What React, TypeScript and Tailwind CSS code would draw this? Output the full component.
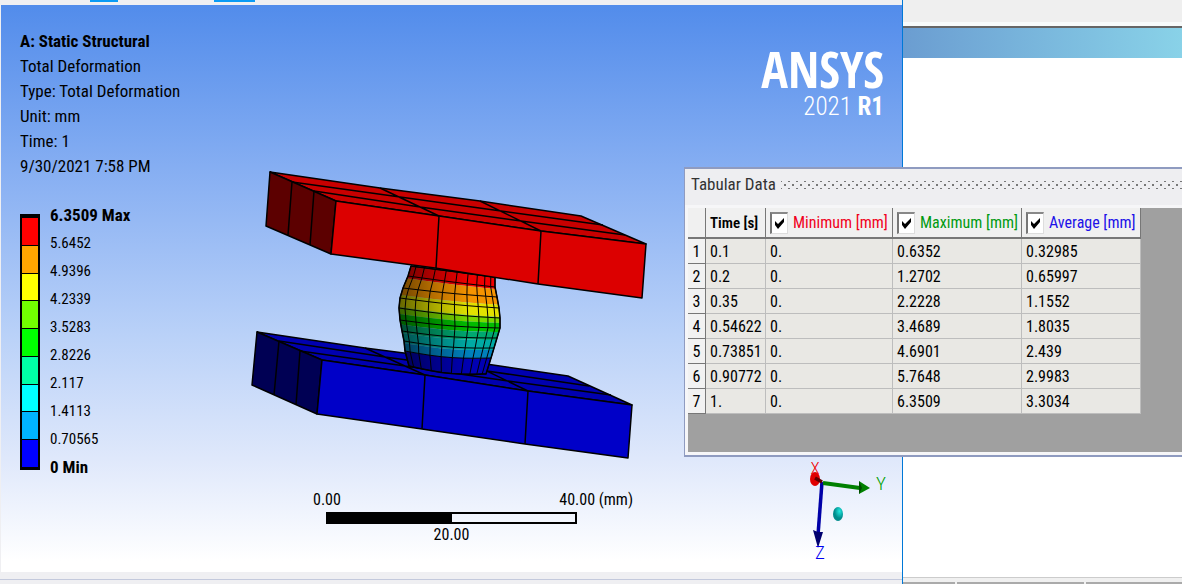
import { useState } from 'react'

type Point = [number, number]

const INFO = ['Total Deformation', 'Type: Total Deformation', 'Unit: mm', 'Time: 1', '9/30/2021 7:58 PM']

const LEGEND_COLORS = [
  'bg-[#ff0000]',
  'bg-[#ffa500]',
  'bg-[#ffff00]',
  'bg-[#73ff00]',
  'bg-[#00ff00]',
  'bg-[#00ffa5]',
  'bg-[#00ffff]',
  'bg-[#00b4ff]',
  'bg-[#0000ff]',
]
const LEGEND_LABELS = ['6.3509 Max', '5.6452', '4.9396', '4.2339', '3.5283', '2.8226', '2.117', '1.4113', '0.70565', '0 Min']

const COLUMNS = [
  { id: 'min', label: 'Minimum [mm]', color: 'text-[#f00020]' },
  { id: 'max', label: 'Maximum [mm]', color: 'text-[#009a10]' },
  { id: 'avg', label: 'Average [mm]', color: 'text-[#2010e8]' },
]
const ROWS = [
  ['0.1', '0.', '0.6352', '0.32985'],
  ['0.2', '0.', '1.2702', '0.65997'],
  ['0.35', '0.', '2.2228', '1.1552'],
  ['0.54622', '0.', '3.4689', '1.8035'],
  ['0.73851', '0.', '4.6901', '2.439'],
  ['0.90772', '0.', '5.7648', '2.9983'],
  ['1.', '0.', '6.3509', '3.3034'],
]

// silhouette of the barrel, one point per mesh row
const LEFT: Point[] = [[411, 266], [408, 276], [403, 288], [400, 298], [399, 308], [400, 320], [402, 331], [404, 341], [405, 351], [409, 366]]
const RIGHT: Point[] = [[495, 277], [495, 287], [497, 297], [499, 308], [500, 318], [500, 328], [497, 338], [494, 348], [491, 358], [486, 374]]
const MERIDIANS = [0, 0.06, 0.16, 0.29, 0.42, 0.55, 0.68, 0.79, 0.88, 0.95, 1]
const BANDS = [
  { from: 0, to: 1.2, fill: '#f00000' },
  { from: 1.2, to: 2.7, fill: '#f59400' },
  { from: 2.7, to: 3.9, fill: '#e2e200' },
  { from: 3.9, to: 4.5, fill: '#78d800' },
  { from: 4.5, to: 5.4, fill: '#00bc00' },
  { from: 5.4, to: 6.2, fill: '#00a870' },
  { from: 6.2, to: 7.2, fill: '#00aaa4' },
  { from: 7.2, to: 8, fill: '#0080bc' },
  { from: 8, to: 9, fill: '#0000b4' },
]

function edgeAt(edge: Point[], v: number): Point {
  const i = Math.min(Math.floor(v), edge.length - 2)
  const t = v - i
  return [edge[i][0] + (edge[i + 1][0] - edge[i][0]) * t, edge[i][1] + (edge[i + 1][1] - edge[i][1]) * t]
}

function meshPoint(u: number, v: number): Point {
  const [lx, ly] = edgeAt(LEFT, v)
  const [rx, ry] = edgeAt(RIGHT, v)
  return [lx + (rx - lx) * u, ly + (ry - ly) * u + Math.sin(Math.PI * u) * v * 0.35]
}

const toPoints = (points: Point[]) => points.map(p => p.join(',')).join(' ')
const row = (v: number) => MERIDIANS.map(u => meshPoint(u, v))

function Barrel() {
  const outline = toPoints([...row(0), ...RIGHT, ...row(9).reverse(), ...[...LEFT].reverse()])
  return (
    <g>
      {BANDS.map(b => (
        <polygon
          key={b.fill}
          fill={b.fill}
          points={toPoints([
            ...row(b.from),
            ...RIGHT.filter((_, i) => i > b.from && i < b.to),
            ...row(b.to).reverse(),
            ...LEFT.filter((_, i) => i > b.from && i < b.to).reverse(),
          ])}
        />
      ))}
      <polygon points={outline} fill="url(#barrel-shade)" stroke="#000" strokeWidth="1.5" />
      <g fill="none" stroke="#000">
        {LEFT.map((_, v) => <polyline key={v} points={toPoints(row(v))} />)}
        {MERIDIANS.map(u => <polyline key={u} points={toPoints(LEFT.map((_, v) => meshPoint(u, v)))} />)}
      </g>
    </g>
  )
}

function Model() {
  return (
    <svg viewBox="250 165 410 300" width="410" height="300" className="shrink-0" role="img">
      <defs>
        <linearGradient id="barrel-shade">
          <stop offset="0" stopColor="#000" stopOpacity="0.55" />
          <stop offset="0.35" stopColor="#000" stopOpacity="0.25" />
          <stop offset="0.7" stopColor="#000" stopOpacity="0" />
        </linearGradient>
      </defs>
      <g stroke="#000" strokeWidth="1.5" strokeLinejoin="round">
        <polygon fill="#0000b0" points="257,332 365,348 466,361 568,376 632,405 528,391 425,375 322,360" />
        <polygon fill="#000054" points="257,332 322,360 317,414 252,385" />
        <polygon fill="#0000c8" points="322,360 425,375 528,391 632,405 628,458 525,444 422,429 317,414" />
        <path
          fill="none"
          d="M279 341 274 395M300 351 296 405M425 375 422 429M528 391 525 444M279 341 385 357 487 371 589 386M300 351 405 366 508 381 611 395M365 348 425 375M466 361 528 391"
        />
      </g>
      <Barrel />
      <g stroke="#000" strokeWidth="1.5" strokeLinejoin="round">
        <polygon fill="#c80000" points="270,172 380,188 480,201 581,216 646,244 541,231 439,216 336,201" />
        <polygon fill="#5c0000" points="270,172 336,201 331,254 266,226" />
        <polygon fill="#dc0000" points="336,201 439,216 541,231 646,244 642,298 538,284 435,268 331,254" />
        <path
          fill="none"
          d="M292 182 288 235M314 191 310 245M439 216 436 268M541 231 538 284M292 182 400 197 501 211 603 225M314 191 420 207 521 221 625 235M380 188 439 216M480 201 541 231"
        />
      </g>
    </svg>
  )
}

function Triad() {
  return (
    <svg viewBox="800 456 102 108" width="102" height="108" role="img">
      <defs>
        <radialGradient id="ball" cx="0.65" cy="0.3">
          <stop offset="0" stopColor="#20e8e0" />
          <stop offset="1" stopColor="#008c8c" />
        </radialGradient>
      </defs>
      <path d="M822 482 818 535" stroke="#0000a8" strokeWidth="3.5" />
      <path d="M813 530 818 532 823 532 818 548Z" fill="#000070" />
      <path d="M823 483 860 488" stroke="#008000" strokeWidth="4" />
      <path d="M859 481 870 488 859 494Z" fill="#008000" />
      <path d="M859 481 862 488 859 494Z" fill="#004800" />
      <ellipse cx="815" cy="479" rx="5" ry="7" fill="#e00000" />
      <path d="M815 478 822 482" stroke="#600000" strokeWidth="3.5" />
      <ellipse cx="838" cy="514" rx="5" ry="7" fill="url(#ball)" />
      <g className="font-light" textAnchor="middle">
        <text x="815" y="474" fontSize="17" fill="#f00000">X</text>
        <text x="881" y="490" fontSize="19" fill="#00a000">Y</text>
        <text x="820" y="559" fontSize="19" fill="#0000f0">Z</text>
      </g>
    </svg>
  )
}

function Legend() {
  return (
    <div className="mt-[22px] flex gap-[10px]">
      <div className="mt-[13px] flex h-64 w-5 flex-col border-t-4 border-b-2 border-black">
        {LEGEND_COLORS.map(c => (
          <div key={c} className={`flex-1 border-x-2 border-b border-black ${c}`} />
        ))}
      </div>
      <ul className="text-[15px] leading-7">
        {LEGEND_LABELS.map((l, i) => (
          <li key={l} className={i === 0 || i === LEGEND_LABELS.length - 1 ? 'text-[17px] leading-7 font-bold' : ''}>{l}</li>
        ))}
      </ul>
    </div>
  )
}

function Ruler() {
  return (
    <div className="mt-[25px] ml-[63px] w-80 text-base leading-5">
      <div className="flex justify-between">
        <span>0.00</span>
        <span>40.00 (mm)</span>
      </div>
      <div className="mx-[13px] mt-[2px] flex h-3 w-[251px] border-2 border-black">
        <div className="w-1/2 bg-black" />
      </div>
      <p className="ml-[13px] w-[251px] pt-px text-center">20.00</p>
    </div>
  )
}

function TabularData() {
  const [shown, setShown] = useState<Record<string, boolean>>({ min: true, max: true, avg: true })

  return (
    <section className="absolute top-[167px] right-0 left-[684px] border-y-2 border-l border-[#8f9bc0] bg-[#f6f6f8]">
      <header className="flex h-9 items-center gap-[5px] bg-[#eeeef1] pb-1 pl-[6px] text-[#333]">
        <h2>Tabular Data</h2>
        <div className="h-2 flex-1 bg-[radial-gradient(#777_1px,transparent_1px),radial-gradient(#777_1px,transparent_1px)] bg-[length:8px_8px] bg-[position:0_0,4px_4px]" />
      </header>
      <div className="mt-[3px] mb-[3px] ml-[3px] bg-[#a0a0a0] pb-[38px]">
        <table className="w-[453px] table-fixed border-separate border-spacing-0 text-left text-base leading-[22px]">
          <colgroup>
            <col className="w-[18px]" />
            <col className="w-[60px]" />
            <col className="w-[127px]" />
            <col className="w-[129px]" />
            <col className="w-[119px]" />
          </colgroup>
          <thead>
            <tr className="h-[31px]">
              <th className="border-r border-b-2 border-[#777] bg-[#f0f0f0]" />
              <th className="border-r border-b-2 border-[#777] bg-[#f0f0f0] pl-1 text-[15px] font-semibold whitespace-nowrap">Time [s]</th>
              {COLUMNS.map(c => (
                <th key={c.id} className="border-r border-b-2 border-[#777] bg-[#f0f0f0] pl-1 font-normal">
                  <label className={`flex items-center gap-[5px] whitespace-nowrap ${c.color}`}>
                    <span className="relative flex">
                      <input
                        type="checkbox"
                        checked={shown[c.id]}
                        onChange={() => setShown({ ...shown, [c.id]: !shown[c.id] })}
                        className="h-[22px] w-[18px] appearance-none border-t-2 border-r border-b border-l-2 border-t-[#888] border-r-[#ddd] border-b-[#ddd] border-l-[#777] bg-white"
                      />
                      {shown[c.id] && (
                        <svg viewBox="0 0 18 22" className="pointer-events-none absolute inset-0 h-[22px] w-[18px]">
                          <path d="M5 9v4l3 4 6-7V6l-6 6z" fill="#000" />
                        </svg>
                      )}
                    </span>
                    {c.label}
                  </label>
                </th>
              ))}
            </tr>
          </thead>
          <tbody>
            {ROWS.map((r, i) => (
              <tr key={r[0]} className="h-[25px]">
                <th className="border-r border-b border-[#777] bg-[#f2f2f2] pt-[2px] text-center font-normal">{i + 1}</th>
                {r.map((value, j) => (
                  <td key={j} className="border-r border-b border-[#bdbdbd] bg-[#e9e8e4] pt-[2px] pl-1">{value}</td>
                ))}
              </tr>
            ))}
          </tbody>
        </table>
      </div>
    </section>
  )
}

export default function App() {
  return (
    <div className="relative grid min-h-screen grid-cols-[903fr_279fr] overflow-hidden bg-white font-['Roboto_Condensed','Open_Sans',sans-serif] text-[17px] text-black">
      <main className="flex flex-col border-r border-[#0078d7] bg-[#efeff2]">
        <div className="flex h-[5px] items-start">
          <div className="ml-[90px] h-[2px] w-7 bg-[#0a9bf5]" />
          <div className="ml-[96px] h-[2px] w-[41px] bg-[#0a9bf5]" />
        </div>
        <div className="ml-px flex flex-1 bg-[linear-gradient(#528ceb,#8db3f3_33%,#b9d1f8_58%,#dfe8fb_80%,#fff_98%)]">
          <div className="w-[249px] shrink-0 pt-6 pl-[19px]">
            <h1 className="leading-[25px] font-bold">A: Static Structural</h1>
            {INFO.map(line => <p key={line} className="leading-[25px]">{line}</p>)}
            <Legend />
          </div>
          <div className="flex-1 pt-40">
            <Model />
            <Ruler />
          </div>
          <div className="flex flex-col items-end justify-between pt-[38px] pb-2 text-white">
            <div className="pr-[18px] text-right">
              <p className="font-['Open_Sans_Condensed','Open_Sans',sans-serif] text-[50px] leading-[52px] font-bold">ANSYS</p>
              <p className="text-[25px] leading-6 font-light">2021 <span className="font-bold">R1</span></p>
            </div>
            <Triad />
          </div>
        </div>
        <div className="h-3 pt-[7px]">
          <div className="border-t border-[#c3c9dc]" />
        </div>
      </main>
      <aside className="flex flex-col">
        <div className="h-[26px] border-b-4 border-[#f8fbfb] bg-[#efefef]" />
        <div className="h-8 border-t-2 border-[#666] bg-linear-to-r from-[#6b9dd1] to-[#89d2e8]" />
        <div className="flex-1" />
        <div className="flex h-[7px] items-end gap-[2px] border-t border-[#ccc] bg-[#f0f0f0]">
          <div className="h-[2px] w-[52px] bg-[#aaa]" />
          <div className="h-[2px] w-[127px] bg-[#aaa]" />
          <div className="h-[2px] flex-1 bg-[#aaa]" />
        </div>
      </aside>
      <TabularData />
    </div>
  )
}
